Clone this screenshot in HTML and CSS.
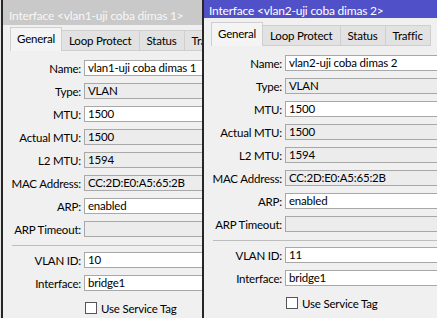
FILE: index.html
```html
<!DOCTYPE html>
<html>
<head>
<meta charset="utf-8">
<link rel="stylesheet" href="styles.css">
</head>
<body>
<div class="desktop">
  <section class="win win-back">
    <header class="titlebar">Interface &lt;vlan1-uji coba dimas 1&gt;</header>
    <nav class="tabs">
      <span class="tab active">General</span>
      <span class="tab">Loop Protect</span>
      <span class="tab">Status</span>
      <span class="tab">Traffic</span>
    </nav>
    <div class="pane">
      <div class="row"><span class="lbl">Name:</span><span class="field edit">vlan1-uji coba dimas 1</span></div>
      <div class="row"><span class="lbl">Type:</span><span class="field">VLAN</span></div>
      <div class="row"><span class="lbl">MTU:</span><span class="field edit">1500</span></div>
      <div class="row"><span class="lbl">Actual MTU:</span><span class="field">1500</span></div>
      <div class="row"><span class="lbl">L2 MTU:</span><span class="field">1594</span></div>
      <div class="row"><span class="lbl">MAC Address:</span><span class="field">CC:2D:E0:A5:65:2B</span></div>
      <div class="row"><span class="lbl">ARP:</span><span class="field edit">enabled</span></div>
      <div class="row"><span class="lbl">ARP Timeout:</span><span class="field"></span></div>
      <div class="sep"></div>
      <div class="row"><span class="lbl">VLAN ID:</span><span class="field edit">10</span></div>
      <div class="row"><span class="lbl">Interface:</span><span class="field edit">bridge1</span></div>
      <div class="row check"><span class="lbl"></span><span class="chk"><span class="box"></span>Use Service Tag</span></div>
    </div>
  </section>
  <section class="win win-front">
    <header class="titlebar">Interface &lt;vlan2-uji coba dimas 2&gt;</header>
    <nav class="tabs">
      <span class="tab active">General</span>
      <span class="tab">Loop Protect</span>
      <span class="tab">Status</span>
      <span class="tab">Traffic</span>
    </nav>
    <div class="pane">
      <div class="row"><span class="lbl">Name:</span><span class="field edit">vlan2-uji coba dimas 2</span></div>
      <div class="row"><span class="lbl">Type:</span><span class="field">VLAN</span></div>
      <div class="row"><span class="lbl">MTU:</span><span class="field edit">1500</span></div>
      <div class="row"><span class="lbl">Actual MTU:</span><span class="field">1500</span></div>
      <div class="row"><span class="lbl">L2 MTU:</span><span class="field">1594</span></div>
      <div class="row"><span class="lbl">MAC Address:</span><span class="field">CC:2D:E0:A5:65:2B</span></div>
      <div class="row"><span class="lbl">ARP:</span><span class="field edit">enabled</span></div>
      <div class="row"><span class="lbl">ARP Timeout:</span><span class="field"></span></div>
      <div class="sep"></div>
      <div class="row"><span class="lbl">VLAN ID:</span><span class="field edit">11</span></div>
      <div class="row"><span class="lbl">Interface:</span><span class="field edit">bridge1</span></div>
      <div class="row check"><span class="lbl"></span><span class="chk"><span class="box"></span>Use Service Tag</span></div>
    </div>
  </section>
</div>
</body>
</html>
```
FILE: styles.css
```css
* { box-sizing: border-box; margin: 0; padding: 0; }
html, body { width: 437px; height: 318px; overflow: hidden; }
body {
  background: #e4e4e4;
  font-family: Lato, "Noto Sans", sans-serif;
  font-size: 11.5px;
  letter-spacing: -0.2px;
  color: #000;
}
.desktop { position: relative; width: 437px; height: 318px; overflow: hidden; }

.win {
  position: absolute;
  top: 0;
  height: 340px;
  background: #f0f0f0;
  border-left: 2px solid #262626;
  display: flex;
  flex-direction: column;
}
.win-back { left: 1px; width: 260px; }
.win-front { left: 202px; width: 260px; }

.titlebar {
  height: 18px;
  padding: 3px 0 0 5px;
  line-height: 16px;
  font-size: 12px;
  white-space: nowrap;
  background: #5050c8;
  color: #fff;
}
.win-back .titlebar {
  height: 25px;
  padding: 8px 0 0 6px;
  background: #c9c9c9;
  color: #f7f7f7;
}

.tabs {
  display: flex;
  align-items: flex-end;
  height: 28px;
  padding: 4px 0 0 7px;
}
.win-back .tabs { height: 26px; padding-top: 2px; }
.tab {
  height: 21px;
  padding: 0 7px;
  line-height: 20px;
  background: #e2e2e2;
  border: 1px solid #cfcfcf;
  border-left: none;
  white-space: nowrap;
}
.tab.active {
  height: 24px;
  padding: 0 6px;
  line-height: 21px;
  background: #f4f4f4;
  border: 1px solid #cfcfcf;
  border-bottom: none;
}

.pane {
  display: flex;
  flex-direction: column;
  gap: 7px;
  padding-top: 9px;
}
.row {
  display: grid;
  grid-template-columns: 78px 1fr;
  column-gap: 3px;
  height: 16px;
  align-items: center;
}
.lbl { text-align: right; white-space: nowrap; }
.field {
  height: 16px;
  padding-left: 3px;
  line-height: 14px;
  white-space: nowrap;
  background: #ececec;
  border: 1px solid #a8a8a8;
  border-right: none;
}
.field.edit { background: #fff; }

.sep {
  height: 1px;
  margin: 1px 0 -1px 9px;
  background: #bdbdbd;
}

.row.check { margin-top: 2px; }
.chk { display: flex; align-items: center; gap: 4px; padding-left: 1px; white-space: nowrap; }
.box {
  width: 12px;
  height: 12px;
  background: #fff;
  border: 1px solid #555;
}
```
